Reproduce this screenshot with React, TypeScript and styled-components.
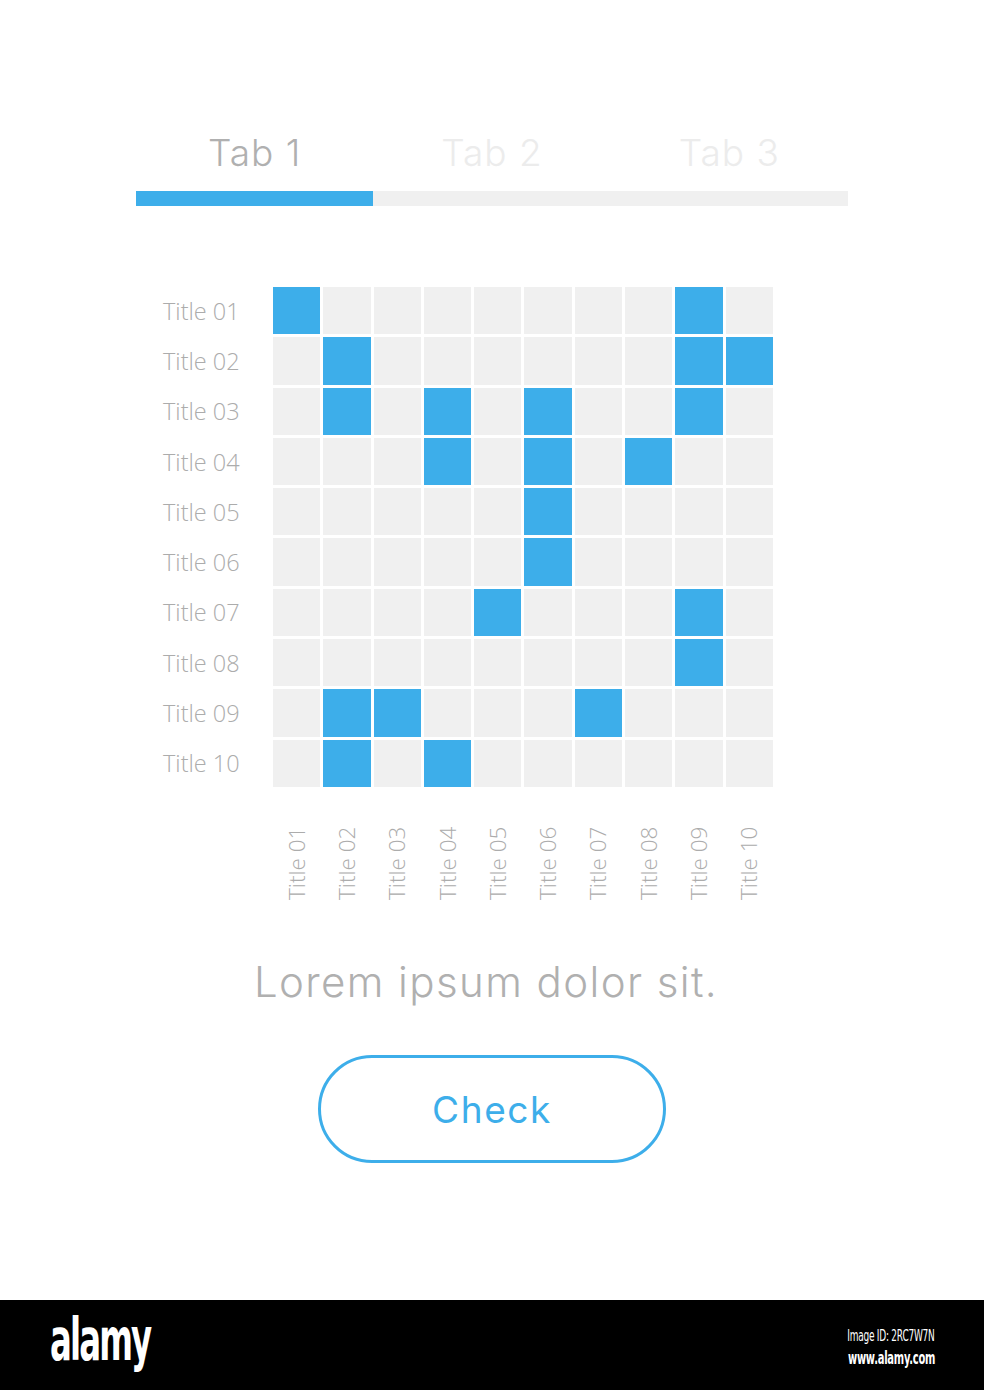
import React from 'react'
import styled, { createGlobalStyle } from 'styled-components'

const GlobalStyle = createGlobalStyle`
  html, body {
    margin: 0;
    padding: 0;
    background: #ffffff;
  }
`

const BLUE = '#3daeea'
const GREY_TEXT = '#b0b0b0'

const titles = ['01', '02', '03', '04', '05', '06', '07', '08', '09', '10'].map(n => `Title ${n}`)

// filled cells, row -> columns (1-indexed)
const filled: Record<number, number[]> = {
    1: [1, 9],
    2: [2, 9, 10],
    3: [2, 4, 6, 9],
    4: [4, 6, 8],
    5: [6],
    6: [6],
    7: [5, 9],
    8: [9],
    9: [2, 3, 7],
    10: [2, 4],
}

const Main = styled.main`
    height: 1300px;
    display: flex;
    justify-content: center;
`

const Content = styled.div`
    width: 712px;
    padding-top: 128px;
    display: flex;
    flex-direction: column;
`

const TabRow = styled.div`
    display: grid;
    grid-template-columns: repeat(3, 1fr);
    height: 50px;
`

const Tab = styled.div<{ $active?: boolean }>`
    font-family: Inter, "Open Sans", sans-serif;
    font-weight: 300;
    font-size: 37px;
    letter-spacing: 1px;
    line-height: 50px;
    text-align: center;
    color: ${p => (p.$active ? GREY_TEXT : '#ececec')};
`

const Track = styled.div`
    margin-top: 13px;
    height: 15px;
    background: #f0f0f0;
    display: flex;
`

const TrackFill = styled.div`
    width: 33.333%;
    background: ${BLUE};
`

const Chart = styled.div`
    margin-top: 81px;
    margin-left: 27px;
    display: grid;
    grid-template-columns: 110px 500px;
`

const RowLabels = styled.div`
    display: grid;
    grid-template-rows: repeat(10, 1fr);
    row-gap: 3px;
    height: 500px;
`

const Label = styled.div`
    font-family: "Open Sans", "Noto Sans", sans-serif;
    font-weight: 300;
    font-size: 23.5px;
    color: #acacac;
    display: flex;
    align-items: center;
`

const Grid = styled.div`
    display: grid;
    grid-template-columns: repeat(10, 1fr);
    grid-template-rows: repeat(10, 1fr);
    gap: 3px;
    width: 500px;
    height: 500px;
`

const Cell = styled.div<{ $on: boolean }>`
    background: ${p => (p.$on ? BLUE : '#f0f0f0')};
`

const ColLabels = styled.div`
    grid-column: 2;
    margin-top: 33px;
    display: grid;
    grid-template-columns: repeat(10, 1fr);
    gap: 3px;
    height: 80px;
`

const ColLabel = styled(Label)`
    font-size: 22.5px;
    justify-content: center;
    align-items: stretch;
`

const VerticalText = styled.span`
    writing-mode: vertical-rl;
    transform: rotate(180deg);
    line-height: 26px;
    white-space: nowrap;
`

const Caption = styled.p`
    margin: 56px 0 0;
    padding-right: 12px;
    font-family: Inter, "Open Sans", sans-serif;
    font-weight: 300;
    font-size: 42px;
    letter-spacing: 1.4px;
    color: ${GREY_TEXT};
    text-align: center;
`

const CheckButton = styled.button`
    align-self: center;
    margin-top: 48px;
    width: 348px;
    height: 108px;
    border: 3px solid ${BLUE};
    border-radius: 54px;
    background: #ffffff;
    color: ${BLUE};
    font-family: Inter, "Open Sans", sans-serif;
    font-weight: 400;
    font-size: 37px;
    letter-spacing: 1.6px;
    cursor: pointer;
`

const Footer = styled.footer`
    height: 90px;
    background: #000000;
    display: flex;
    align-items: center;
    justify-content: space-between;
    padding: 0 49px 0 50px;
    box-sizing: border-box;
`

const Logo = styled.span`
    font-family: "DejaVu Sans", sans-serif;
    font-stretch: condensed;
    font-weight: 700;
    font-size: 58px;
    letter-spacing: -3px;
    color: #ffffff;
    line-height: 1;
    margin-top: -10px;
    display: inline-block;
    transform: scaleX(0.62);
    transform-origin: left center;
`

const FooterInfo = styled.div`
    display: flex;
    flex-direction: column;
    align-items: flex-end;
    gap: 3px;
    color: #ffffff;
    font-family: "DejaVu Sans", sans-serif;
    margin-top: 4px;
`

const FooterLine = styled.span<{ $bold?: boolean }>`
    display: inline-block;
    font-size: ${p => (p.$bold ? '17px' : '15px')};
    font-weight: ${p => (p.$bold ? 700 : 400)};
    letter-spacing: -0.4px;
    transform: scaleX(${p => (p.$bold ? 0.585 : 0.6)});
    transform-origin: right center;
`

export default function App() {
    return (
        <>
            <GlobalStyle />
            <Main>
                <Content>
                    <TabRow>
                        <Tab $active>Tab 1</Tab>
                        <Tab>Tab 2</Tab>
                        <Tab>Tab 3</Tab>
                    </TabRow>
                    <Track>
                        <TrackFill />
                    </Track>

                    <Chart>
                        <RowLabels>
                            {titles.map(t => <Label key={t}>{t}</Label>)}
                        </RowLabels>
                        <Grid>
                            {titles.map((_, r) =>
                                titles.map((__, c) => (
                                    <Cell key={`${r}-${c}`} $on={filled[r + 1].includes(c + 1)} />
                                ))
                            )}
                        </Grid>
                        <ColLabels>
                            {titles.map(t => (
                                <ColLabel key={t}>
                                    <VerticalText>{t}</VerticalText>
                                </ColLabel>
                            ))}
                        </ColLabels>
                    </Chart>

                    <Caption>Lorem ipsum dolor sit.</Caption>
                    <CheckButton>Check</CheckButton>
                </Content>
            </Main>
            <Footer>
                <Logo>alamy</Logo>
                <FooterInfo>
                    <FooterLine>Image ID: 2RC7W7N</FooterLine>
                    <FooterLine $bold>www.alamy.com</FooterLine>
                </FooterInfo>
            </Footer>
        </>
    )
}
